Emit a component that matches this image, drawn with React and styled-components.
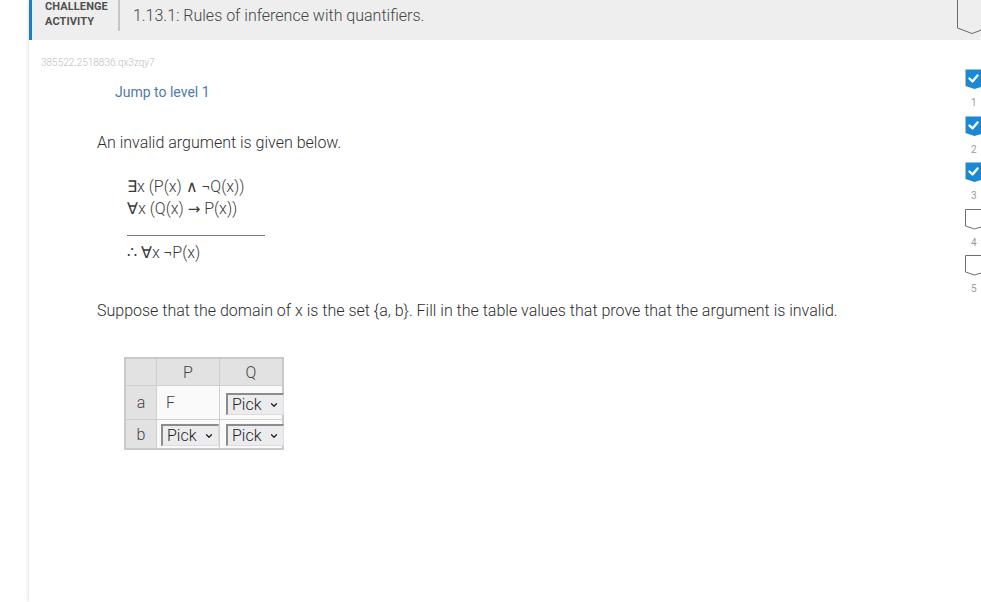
import React from 'react';
import styled, { createGlobalStyle } from 'styled-components';
import { ChevronDown } from 'lucide-react';

const GlobalStyle = createGlobalStyle`
  html, body {
    margin: 0;
    padding: 0;
    background: #ffffff;
    overflow: hidden;
  }
  body {
    font-family: Roboto, "Liberation Sans", sans-serif;
    color: #333333;
  }
`

const Page = styled.div`
  display: flex;
  flex-direction: row;
  min-height: 602px;
  padding-left: 29px;
`
const Card = styled.div`
  flex: 1;
  display: flex;
  flex-direction: column;
  background: #ffffff;
  box-shadow: -1px 0 3px rgba(0, 0, 0, 0.12);
`
const Header = styled.div`
  display: flex;
  flex-direction: row;
  align-items: flex-start;
  height: 40px;
  background: #eeeeee;
  border-left: 3px solid #1b7fc4;
  padding-left: 13px;
`
const Label = styled.div`
  font-size: 11px;
  font-weight: 700;
  line-height: 15px;
  color: #4f4f4f;
  letter-spacing: 0.1px;
  padding-right: 10px;
  margin-top: -1px;
  border-right: 2px solid #c6c6c6;
  height: 32px;
`
const Title = styled.div`
  font-size: 16px;
  font-weight: 300;
  color: #444444;
  line-height: 20px;
  padding-left: 13px;
  margin-top: 6px;
  flex: 1;
`
const Badge = styled.svg`
  display: block;
  flex-shrink: 0;
`
const Body = styled.div`
  display: flex;
  flex-direction: row;
  flex: 1;
`
const Main = styled.div`
  flex: 1;
  display: flex;
  flex-direction: column;
  padding-left: 12px;
`
const ActivityId = styled.div`
  margin-top: 17px;
  font-size: 10px;
  line-height: 12px;
  font-weight: 300;
  color: #bdbdbd;
`
const Content = styled.div`
  padding-left: 56px;
  display: flex;
  flex-direction: column;
  align-items: flex-start;
`
const JumpLink = styled.a`
  margin-top: 13px;
  margin-left: 18px;
  font-size: 14px;
  font-weight: 400;
  line-height: 20px;
  color: #4f7aa6;
  text-decoration: none;
  cursor: pointer;
`
const Paragraph = styled.p`
  margin: ${p => p.$top}px 0 0 0;
  font-size: 16px;
  font-weight: 300;
  line-height: 22px;
  color: #2e2e2e;
`
const Argument = styled.div`
  margin-top: 22px;
  margin-left: 30px;
  display: flex;
  flex-direction: column;
  font-size: 16px;
  font-weight: 300;
  line-height: 22px;
  color: #3a3a3a;
`
const Arrow = styled.span`
  font-family: "DejaVu Sans", sans-serif;
  font-size: 15px;
  font-weight: 400;
  line-height: 20px;
`
const Rule = styled.div`
  width: 138px;
  height: 1px;
  background: #7a7a7a;
  margin: 15px 0 6px 0;
`
const Table = styled.table`
  margin-top: 35px;
  margin-left: 27px;
  border-collapse: collapse;
  table-layout: fixed;
  width: 158px;
  border: 2px solid #c9c9c9;
  font-size: 16px;
  font-weight: 300;
  color: #444444;
`
const HeadCell = styled.th`
  background: #e2e2e2;
  border: 1px solid #cfcfcf;
  font-weight: 300;
  height: ${p => p.$h || 26}px;
  width: ${p => p.$w}px;
  padding: 0;
  text-align: center;
`
const Cell = styled.td`
  background: #fafafa;
  border: 1px solid #cfcfcf;
  height: ${p => p.$h}px;
  padding: 0 0 0 ${p => p.$pad}px;
  text-align: left;
  overflow: visible;
`
const SelectWrap = styled.div`
  position: relative;
  width: 58px;
  height: 22px;
  margin-top: 2px;
`
const Select = styled.select`
  appearance: none;
  width: 58px;
  height: 22px;
  box-sizing: border-box;
  border-style: solid;
  border-width: 2px 1px 1px 2px;
  border-color: #8c8c8c #dcdcdc #dcdcdc #8c8c8c;
  background: #ececef;
  font-family: Roboto, "Liberation Sans", sans-serif;
  font-size: 16px;
  font-weight: 300;
  color: #222222;
  padding: 0 0 0 4px;
  margin: 0;
  border-radius: 0;
  outline: none;
`
const Chevron = styled(ChevronDown)`
  position: absolute;
  right: 5px;
  top: 7px;
  pointer-events: none;
  color: #222222;
`
const Levels = styled.div`
  width: 16px;
  display: flex;
  flex-direction: column;
  padding-top: 29px;
  overflow: hidden;
`
const Level = styled.div`
  display: flex;
  flex-direction: column;
  height: 46.5px;
`
const LevelNum = styled.div`
  font-size: 10px;
  line-height: 12px;
  color: #9a9a9a;
  padding-left: 6px;
  margin-top: 7px;
`

function PickSelect() {
  return (
    <SelectWrap>
      <Select defaultValue="">
        <option value="">Pick</option>
        <option value="T">T</option>
        <option value="F">F</option>
      </Select>
      <Chevron size={10} strokeWidth={3} />
    </SelectWrap>
  )
}

function LevelBox({ done }) {
  const shape = 'M0.5 0.5 H19.5 V17 L9.5 20 L0.5 17 Z'
  return (
    <svg width="16" height="21" viewBox="0 0 16 21">
      {done ? (
        <>
          <path d={shape} fill="#1a88d2" />
          <path d="M4.5 9.5 L7.5 12.5 L12.5 6.5" fill="none" stroke="#ffffff" strokeWidth="2.4" strokeLinecap="round" strokeLinejoin="round" />
        </>
      ) : (
        <path d={shape} fill="#ffffff" stroke="#6e6e6e" strokeWidth="1" />
      )}
    </svg>
  )
}

const levels = [
  { n: 1, done: true },
  { n: 2, done: true },
  { n: 3, done: true },
  { n: 4, done: false },
  { n: 5, done: false },
]

export default function App() {
  return (
    <>
      <GlobalStyle />
      <Page>
        <Card>
          <Header>
            <Label>CHALLENGE<br />ACTIVITY</Label>
            <Title>1.13.1: Rules of inference with quantifiers.</Title>
            <Badge width="24" height="35" viewBox="0 0 24 35">
              <path d="M0.5 0 V28 L15 33.5 L30 28 V0" fill="none" stroke="#6a6a6a" strokeWidth="1" />
            </Badge>
          </Header>
          <Body>
            <Main>
              <ActivityId>385522.2518836.qx3zqy7</ActivityId>
              <Content>
                <JumpLink>Jump to level 1</JumpLink>
                <Paragraph $top={30}>An invalid argument is given below.</Paragraph>
                <Argument>
                  <span>∃x (P(x) ∧ ¬Q(x))</span>
                  <span>∀x (Q(x) <Arrow>→</Arrow> P(x))</span>
                  <Rule />
                  <span>∴ ∀x ¬P(x)</span>
                </Argument>
                <Paragraph $top={36}>
                  Suppose that the domain of x is the set {'{'}a, b{'}'}. Fill in the table values that prove that the argument is invalid.
                </Paragraph>
                <Table>
                  <thead>
                    <tr>
                      <HeadCell $w={30} />
                      <HeadCell $w={62}>P</HeadCell>
                      <HeadCell $w={62}>Q</HeadCell>
                    </tr>
                  </thead>
                  <tbody>
                    <tr>
                      <HeadCell as="td" $h={33}>a</HeadCell>
                      <Cell $h={33} $pad={9}>F</Cell>
                      <Cell $h={33} $pad={6}><PickSelect /></Cell>
                    </tr>
                    <tr>
                      <HeadCell as="td" $h={28}>b</HeadCell>
                      <Cell $h={28} $pad={4}><PickSelect /></Cell>
                      <Cell $h={28} $pad={6}><PickSelect /></Cell>
                    </tr>
                  </tbody>
                </Table>
              </Content>
            </Main>
            <Levels>
              {levels.map(l => (
                <Level key={l.n}>
                  <LevelBox done={l.done} />
                  <LevelNum>{l.n}</LevelNum>
                </Level>
              ))}
            </Levels>
          </Body>
        </Card>
      </Page>
    </>
  )
}
